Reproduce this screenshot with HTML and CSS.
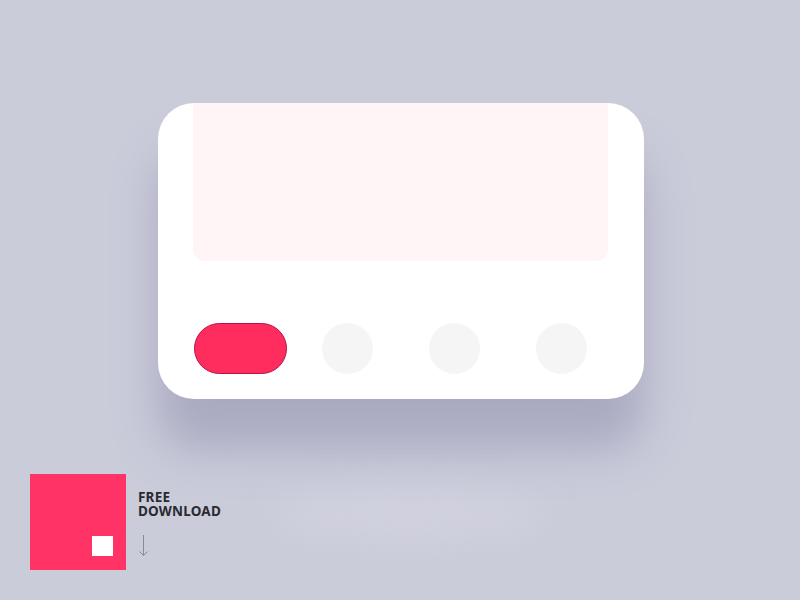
FILE: index.html
```html
<!DOCTYPE html>
<html>
<head>
<meta charset="utf-8">
<link rel="stylesheet" href="styles.css">
</head>
<body>
<div class="stage">
  <div class="card">
    <div class="panel"></div>
    <div class="tabs">
      <div class="tab tab-active"></div>
      <div class="tab tab-circle"></div>
      <div class="tab tab-circle"></div>
      <div class="tab tab-circle"></div>
    </div>
  </div>
  <div class="reflection"></div>
</div>
<div class="brand">
  <div class="logo"><div class="logo-dot"></div></div>
  <div class="brand-text">
    <div class="label">FREE</div>
    <div class="label">DOWNLOAD</div>
    <div class="arrow">
      <svg width="12" height="24" viewBox="0 0 12 24"><path d="M5.5 1 V21.5 M1.5 17.5 L5.5 21.5 L9.5 17.5" fill="none" stroke="#8a8a96" stroke-width="1"/></svg>
    </div>
  </div>
</div>
</body>
</html>
```
FILE: styles.css
```css
html, body {
  margin: 0;
  padding: 0;
  width: 800px;
  height: 600px;
  overflow: hidden;
  background: #cbccda;
  font-family: "Noto Sans", "Open Sans", sans-serif;
}
.stage {
  position: relative;
  height: 474px;
  padding-top: 103px;
  box-sizing: border-box;
}
.card {
  position: relative;
  z-index: 1;
  margin-left: 158px;
  width: 486px;
  height: 296px;
  background: #fff;
  border-radius: 36px;
  box-shadow: 0 50px 45px rgba(110, 110, 150, 0.36);
  display: flex;
  flex-direction: column;
  box-sizing: border-box;
  padding: 0 36px 0 35px;
}
.panel {
  height: 158px;
  background: #fff5f6;
  border-radius: 0 0 12px 12px;
}
.tabs {
  margin-top: 62px;
  margin-left: 1px;
  display: flex;
  align-items: center;
}
.tab {
  width: 51px;
  height: 51px;
  border-radius: 50%;
  background: #f5f5f5;
}
.tab-circle + .tab-circle {
  margin-left: 56px;
}
.tab-active {
  width: 93px;
  border-radius: 26px;
  background: #ff2d5e;
  box-sizing: border-box;
  border: 1px solid #b8104a;
  margin-right: 35px;
}
.reflection {
  position: absolute;
  left: 270px;
  top: 490px;
  width: 280px;
  height: 50px;
  border-radius: 50%;
  background: rgba(215, 216, 230, 0.5);
  filter: blur(18px);
}
.brand {
  display: flex;
  margin-left: 30px;
  gap: 12px;
}
.logo {
  width: 96px;
  height: 96px;
  background: #ff3366;
  position: relative;
}
.logo-dot {
  position: absolute;
  left: 62px;
  top: 62px;
  width: 21px;
  height: 20px;
  background: #fff;
}
.brand-text {
  display: flex;
  flex-direction: column;
  padding-top: 16px;
}
.label {
  font-weight: 700;
  font-size: 13.5px;
  line-height: 14px;
  height: 14px;
  color: #2a2a30;
  letter-spacing: 0.2px;
}
.arrow {
  margin-top: 16px;
}
```
